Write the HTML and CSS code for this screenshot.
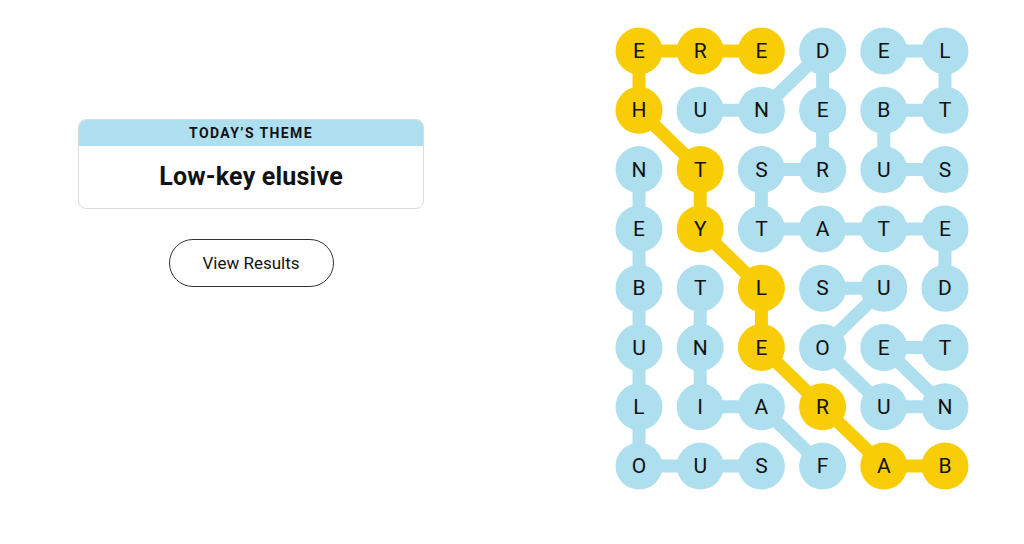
FILE: index.html
```html
<!DOCTYPE html>
<html lang="en">
<head>
<meta charset="utf-8">
<title>Strands</title>
<link rel="stylesheet" href="styles.css">
</head>
<body>
<main class="page">
  <section class="side">
    <div class="theme-card">
      <div class="theme-head">TODAY’S THEME</div>
      <div class="theme-body">Low-key elusive</div>
    </div>
    <button class="results-btn" type="button">View Results</button>
  </section>
  <section class="board">
    <svg class="grid" width="360" height="470" viewBox="0 0 360 470" xmlns="http://www.w3.org/2000/svg">
      <g class="links blue">
        <polyline points="210.6,26 149.4,85.3 88.2,85.3"/>
        <polyline points="210.6,26 210.6,144.6 149.4,144.6 149.4,203.9 333,203.9 333,263.2"/>
        <polyline points="333,144.6 271.8,144.6 271.8,85.3 333,85.3 333,26 271.8,26"/>
        <polyline points="27,144.6 27,441.1 149.4,441.1"/>
        <polyline points="210.6,441.1 149.4,381.8 88.2,381.8 88.2,263.2"/>
        <polyline points="333,322.5 271.8,322.5 333,381.8 271.8,381.8 210.6,322.5 271.8,263.2 210.6,263.2"/>
      </g>
      <g class="links yellow">
        <polyline points="149.4,26 27,26 27,85.3 88.2,144.6 88.2,203.9 149.4,263.2 149.4,322.5 210.6,381.8 271.8,441.1 333,441.1"/>
      </g>
      <g class="cells">
        <circle class="y" cx="27" cy="26" r="23.5"/><circle class="y" cx="88.2" cy="26" r="23.5"/><circle class="y" cx="149.4" cy="26" r="23.5"/><circle cx="210.6" cy="26" r="23.5"/><circle cx="271.8" cy="26" r="23.5"/><circle cx="333" cy="26" r="23.5"/>
        <circle class="y" cx="27" cy="85.3" r="23.5"/><circle cx="88.2" cy="85.3" r="23.5"/><circle cx="149.4" cy="85.3" r="23.5"/><circle cx="210.6" cy="85.3" r="23.5"/><circle cx="271.8" cy="85.3" r="23.5"/><circle cx="333" cy="85.3" r="23.5"/>
        <circle cx="27" cy="144.6" r="23.5"/><circle class="y" cx="88.2" cy="144.6" r="23.5"/><circle cx="149.4" cy="144.6" r="23.5"/><circle cx="210.6" cy="144.6" r="23.5"/><circle cx="271.8" cy="144.6" r="23.5"/><circle cx="333" cy="144.6" r="23.5"/>
        <circle cx="27" cy="203.9" r="23.5"/><circle class="y" cx="88.2" cy="203.9" r="23.5"/><circle cx="149.4" cy="203.9" r="23.5"/><circle cx="210.6" cy="203.9" r="23.5"/><circle cx="271.8" cy="203.9" r="23.5"/><circle cx="333" cy="203.9" r="23.5"/>
        <circle cx="27" cy="263.2" r="23.5"/><circle cx="88.2" cy="263.2" r="23.5"/><circle class="y" cx="149.4" cy="263.2" r="23.5"/><circle cx="210.6" cy="263.2" r="23.5"/><circle cx="271.8" cy="263.2" r="23.5"/><circle cx="333" cy="263.2" r="23.5"/>
        <circle cx="27" cy="322.5" r="23.5"/><circle cx="88.2" cy="322.5" r="23.5"/><circle class="y" cx="149.4" cy="322.5" r="23.5"/><circle cx="210.6" cy="322.5" r="23.5"/><circle cx="271.8" cy="322.5" r="23.5"/><circle cx="333" cy="322.5" r="23.5"/>
        <circle cx="27" cy="381.8" r="23.5"/><circle cx="88.2" cy="381.8" r="23.5"/><circle cx="149.4" cy="381.8" r="23.5"/><circle class="y" cx="210.6" cy="381.8" r="23.5"/><circle cx="271.8" cy="381.8" r="23.5"/><circle cx="333" cy="381.8" r="23.5"/>
        <circle cx="27" cy="441.1" r="23.5"/><circle cx="88.2" cy="441.1" r="23.5"/><circle cx="149.4" cy="441.1" r="23.5"/><circle cx="210.6" cy="441.1" r="23.5"/><circle class="y" cx="271.8" cy="441.1" r="23.5"/><circle class="y" cx="333" cy="441.1" r="23.5"/>
      </g>
      <g class="letters">
        <text x="27" y="26">E</text><text x="88.2" y="26">R</text><text x="149.4" y="26">E</text><text x="210.6" y="26">D</text><text x="271.8" y="26">E</text><text x="333" y="26">L</text>
        <text x="27" y="85.3">H</text><text x="88.2" y="85.3">U</text><text x="149.4" y="85.3">N</text><text x="210.6" y="85.3">E</text><text x="271.8" y="85.3">B</text><text x="333" y="85.3">T</text>
        <text x="27" y="144.6">N</text><text x="88.2" y="144.6">T</text><text x="149.4" y="144.6">S</text><text x="210.6" y="144.6">R</text><text x="271.8" y="144.6">U</text><text x="333" y="144.6">S</text>
        <text x="27" y="203.9">E</text><text x="88.2" y="203.9">Y</text><text x="149.4" y="203.9">T</text><text x="210.6" y="203.9">A</text><text x="271.8" y="203.9">T</text><text x="333" y="203.9">E</text>
        <text x="27" y="263.2">B</text><text x="88.2" y="263.2">T</text><text x="149.4" y="263.2">L</text><text x="210.6" y="263.2">S</text><text x="271.8" y="263.2">U</text><text x="333" y="263.2">D</text>
        <text x="27" y="322.5">U</text><text x="88.2" y="322.5">N</text><text x="149.4" y="322.5">E</text><text x="210.6" y="322.5">O</text><text x="271.8" y="322.5">E</text><text x="333" y="322.5">T</text>
        <text x="27" y="381.8">L</text><text x="88.2" y="381.8">I</text><text x="149.4" y="381.8">A</text><text x="210.6" y="381.8">R</text><text x="271.8" y="381.8">U</text><text x="333" y="381.8">N</text>
        <text x="27" y="441.1">O</text><text x="88.2" y="441.1">U</text><text x="149.4" y="441.1">S</text><text x="210.6" y="441.1">F</text><text x="271.8" y="441.1">A</text><text x="333" y="441.1">B</text>
      </g>
    </svg>
  </section>
</main>
</body>
</html>
```

FILE: styles.css
```css
* { box-sizing: border-box; }

html, body {
  margin: 0;
  padding: 0;
  background: #ffffff;
}

body {
  font-family: Roboto, "Liberation Sans", Arial, sans-serif;
  color: #121212;
}

.page {
  display: flex;
  width: 1024px;
  height: 544px;
  overflow: hidden;
}

.side {
  width: 502px;
  flex: none;
  display: flex;
  flex-direction: column;
  align-items: center;
  padding-top: 119px;
}

.theme-card {
  width: 346px;
  border: 1px solid #dcdcdc;
  border-radius: 8px;
  overflow: hidden;
  background: #fff;
}

.theme-head {
  height: 26px;
  line-height: 27px;
  background: #aedfee;
  text-align: center;
  font-size: 14px;
  font-weight: 700;
  letter-spacing: 1.4px;
  color: #121212;
}

.theme-body {
  height: 62px;
  display: flex;
  align-items: center;
  justify-content: center;
  font-size: 25px;
  font-weight: 700;
  letter-spacing: 0.2px;
  color: #121212;
  padding-bottom: 2px;
}

.results-btn {
  margin-top: 30px;
  width: 165px;
  height: 48px;
  border: 1.5px solid #333;
  border-radius: 24px;
  background: #fff;
  font-family: Roboto, "Liberation Sans", Arial, sans-serif;
  font-size: 17px;
  font-weight: 400;
  color: #121212;
  padding: 0;
}

.board {
  padding: 25px 0 0 110px;
}

.grid {
  display: block;
}

.links polyline {
  fill: none;
  stroke-width: 13;
  stroke-linejoin: round;
  stroke-linecap: round;
}

.links.blue polyline { stroke: #aedfee; }
.links.yellow polyline { stroke: #f8cd05; }

.cells circle { fill: #aedfee; }
.cells circle.y { fill: #f8cd05; }

.letters text {
  font-family: Roboto, "Liberation Sans", Arial, sans-serif;
  font-size: 21px;
  font-weight: 400;
  fill: #121212;
  text-anchor: middle;
  dominant-baseline: central;
}
```
